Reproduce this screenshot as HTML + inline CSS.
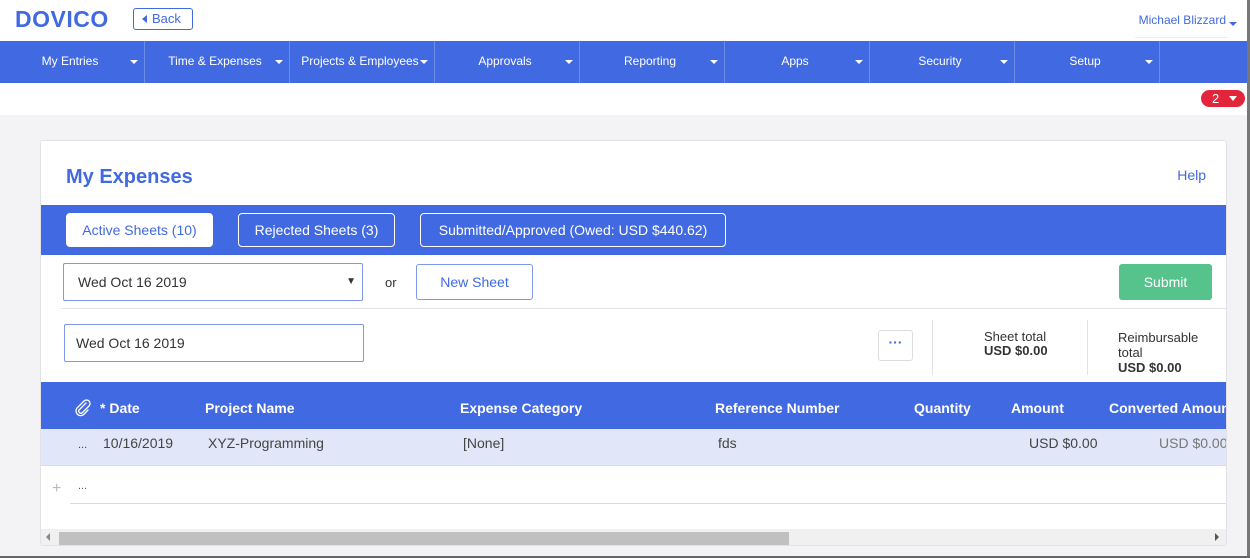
<!DOCTYPE html>
<html><head><style>
*{box-sizing:border-box;margin:0;padding:0}
body{width:1250px;height:558px;overflow:hidden;background:#f3f3f5;font-family:"Liberation Sans",Arial,sans-serif;position:relative;color:#333}
.abs{position:absolute}
.top{left:0;top:0;width:1250px;height:115px;background:#fff}
.logo{left:15px;top:6px;font-size:23px;font-weight:bold;color:#4169e1;letter-spacing:0.5px}
.back{left:133px;top:8px;width:60px;height:22px;border:1px solid #4169e1;border-radius:3px;color:#4169e1;font-size:13px;line-height:20px;padding-left:18px}
.back:before{content:"";position:absolute;left:8px;top:6px;border-right:5px solid #4169e1;border-top:4px solid transparent;border-bottom:4px solid transparent}
.user{right:24px;top:13px;font-size:12px;color:#4169e1}
.user:after{content:"";position:absolute;right:-11px;top:9px;border-top:4px solid #4169e1;border-left:4px solid transparent;border-right:4px solid transparent}
.nav{left:0;top:41px;width:1250px;height:42px;background:#4169e1}
.ni{position:absolute;top:0;height:42px;width:145px;border-right:1px solid #6c8ce8;color:#fff;font-size:12px;line-height:41px}
.ni span{position:absolute;left:0;width:140px;text-align:center}
.ni:after{content:"";position:absolute;right:6px;top:19px;border-top:4px solid #fff;border-left:4px solid transparent;border-right:4px solid transparent}
.badge{left:1201px;top:90px;width:44px;height:17px;background:#e3253b;border-radius:9px;color:#fff;font-size:13px;line-height:17px;padding-left:11px}
.badge:after{content:"";position:absolute;right:8px;top:6px;border-top:5px solid #fff;border-left:4px solid transparent;border-right:4px solid transparent}
.card{left:40px;top:140px;width:1187px;height:406px;background:#fff;border:1px solid #e2e2e6;border-radius:3px;overflow:hidden}
.title{left:25px;top:25px;font-size:20px;font-weight:bold;color:#4169e1}
.help{right:20px;top:26px;font-size:14px;color:#4169e1}
.band{left:0;top:64px;width:1187px;height:50px;background:#4169e1}
.tab{position:absolute;top:8px;height:34px;border:1px solid #fff;border-radius:4px;color:#fff;font-size:14px;line-height:32px;text-align:center}
.sel{border:1px solid #7d98ec;border-radius:2px;font-size:14px;color:#333;padding-left:14px;line-height:36px;height:38px}
.nsb{left:375px;top:123px;width:117px;height:36px;border:1px solid #7d98ec;border-radius:3px;color:#4169e1;font-size:14px;text-align:center;line-height:34px}
.sub{left:1078px;top:123px;width:93px;height:36px;background:#55c38b;border-radius:3px;color:#fff;font-size:14px;text-align:center;line-height:36px}
.th{left:0;top:241px;width:1187px;height:47px;background:#4169e1;color:#fff;font-size:14px;font-weight:bold}
.th span,.r1 span{position:absolute;top:18px;white-space:nowrap}
.r1{left:0;top:288px;width:1187px;height:37px;background:#e1e7f8;border-bottom:1px solid #dcdcdc;font-size:14px;color:#444}
.r1 span{top:6px}
</style></head><body>
<div class="abs top"></div>
<div class="abs logo">DOVICO</div>
<div class="abs back">Back</div>
<div class="abs user">Michael Blizzard</div>
<div class="abs" style="left:1135px;top:37px;width:93px;height:1px;background:#eee"></div>
<div class="abs nav">
<div class="ni" style="left:0"><span>My Entries</span></div>
<div class="ni" style="left:145px"><span>Time &amp; Expenses</span></div>
<div class="ni" style="left:290px"><span>Projects &amp; Employees</span></div>
<div class="ni" style="left:435px"><span>Approvals</span></div>
<div class="ni" style="left:580px"><span>Reporting</span></div>
<div class="ni" style="left:725px"><span>Apps</span></div>
<div class="ni" style="left:870px"><span>Security</span></div>
<div class="ni" style="left:1015px"><span>Setup</span></div>
</div>
<div class="abs badge">2</div>
<div class="abs card">
<div class="abs title">My Expenses</div>
<div class="abs help">Help</div>
<div class="abs band">
<div class="tab" style="left:25px;width:147px;background:#fff;color:#4169e1">Active Sheets (10)</div>
<div class="tab" style="left:197px;width:157px">Rejected Sheets (3)</div>
<div class="tab" style="left:379px;width:306px">Submitted/Approved (Owed: USD $440.62)</div>
</div>
<div class="abs sel" style="left:22px;top:122px;width:300px">Wed Oct 16 2019<span style="position:absolute;right:6px;top:0;font-size:10px">▼</span></div>
<div class="abs" style="left:344px;top:134px;font-size:13px">or</div>
<div class="abs nsb">New Sheet</div>
<div class="abs sub">Submit</div>
<div class="abs" style="left:20px;top:167px;width:1167px;height:1px;background:#e2e2e2"></div>
<div class="abs sel" style="left:23px;top:183px;width:300px;padding-left:11px">Wed Oct 16 2019</div>
<div class="abs" style="left:837px;top:189px;width:35px;height:31px;border:1px solid #ddd;border-radius:3px;color:#4169e1;text-align:center;font-size:14px;line-height:22px;font-weight:bold">···</div>
<div class="abs" style="left:891px;top:179px;width:1px;height:55px;background:#e2e2e2"></div>
<div class="abs" style="left:1046px;top:179px;width:1px;height:55px;background:#e2e2e2"></div>
<div class="abs" style="left:943px;top:189px;font-size:13px;line-height:14px">Sheet total<br><b>USD $0.00</b></div>
<div class="abs" style="left:1077px;top:189px;font-size:13px;line-height:15px">Reimbursable<br>total<br><b>USD $0.00</b></div>
<div class="abs th">
<svg style="position:absolute;left:33px;top:17px" width="18" height="18" viewBox="0 0 18 18"><path d="M12 4 L5 11 a2.2 2.2 0 0 0 3 3 L15 7 a3.5 3.5 0 0 0 -5 -5 L3 9 a4.7 4.7 0 0 0 6.6 6.6 L14 11" fill="none" stroke="#fff" stroke-width="1.3" stroke-linecap="round"/></svg>
<span style="left:59px">* Date</span>
<span style="left:164px">Project Name</span>
<span style="left:419px">Expense Category</span>
<span style="left:674px">Reference Number</span>
<span style="left:873px">Quantity</span>
<span style="left:970px">Amount</span>
<span style="left:1068px">Converted Amount</span>
</div>
<div class="abs r1">
<span style="left:37px;top:10px;font-size:11px">...</span>
<span style="left:62px">10/16/2019</span>
<span style="left:167px">XYZ-Programming</span>
<span style="left:422px">[None]</span>
<span style="left:677px">fds</span>
<span style="left:988px">USD $0.00</span>
<span style="left:1118px;color:#777">USD $0.00</span>
</div>
<div class="abs" style="left:11px;top:339px;font-size:16px;color:#bbb">+</div>
<div class="abs" style="left:37px;top:339px;font-size:11px;color:#555">...</div>
<div class="abs" style="left:29px;top:362px;width:1158px;height:1px;background:#dcdcdc"></div>
<div class="abs" style="left:0;top:388px;width:1187px;height:17px;background:#f0f0f0"></div>
<div class="abs" style="left:18px;top:391px;width:730px;height:13px;background:#c0c0c0"></div>
<div class="abs" style="left:5px;top:392px;border-right:4px solid #888;border-top:4px solid transparent;border-bottom:4px solid transparent"></div>
<div class="abs" style="left:1174px;top:392px;border-left:4px solid #555;border-top:4px solid transparent;border-bottom:4px solid transparent"></div>
</div>
<div class="abs" style="left:1247px;top:0;width:3px;height:558px;background:#777"></div>
<div class="abs" style="left:0;top:556px;width:1250px;height:2px;background:#666"></div>
</body></html>
